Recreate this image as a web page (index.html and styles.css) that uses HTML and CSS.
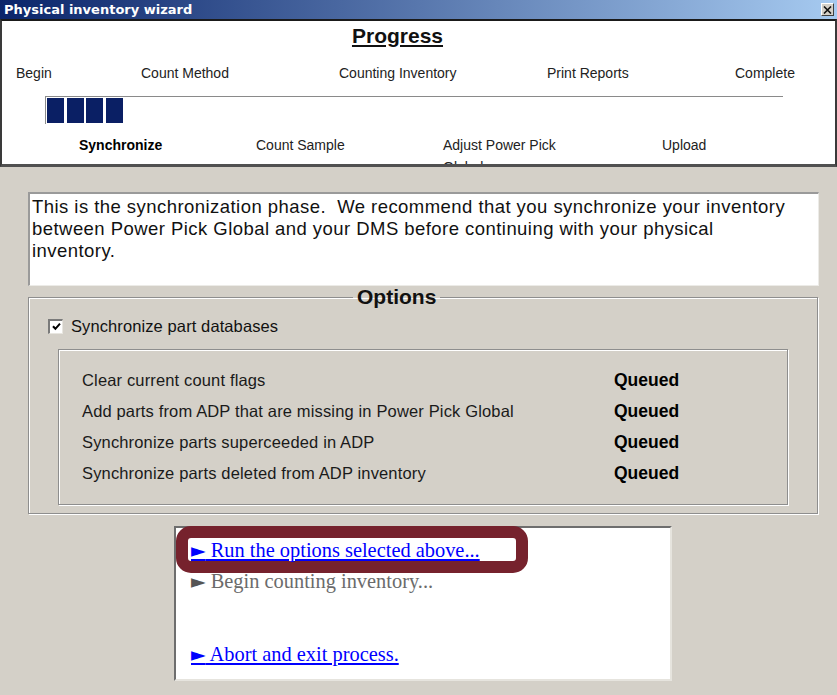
FILE: index.html
```html
<!DOCTYPE html>
<html lang="en">

<head>
    <meta charset="UTF-8">
    <meta name="viewport" content="width=device-width, initial-scale=1.0">
    <title>Physical inventory wizard</title>
    <link rel="stylesheet" href="styles.css">
</head>

<body>
    <div class="window">
        <!-- Title Bar -->
        <div class="titlebar">
            <span class="title">Physical inventory wizard</span>
            <span class="close-btn">
                <svg width="9" height="8" viewBox="0 0 9 8">
                    <path d="M1 0.5 L8 7.5 M8 0.5 L1 7.5" stroke="#111" stroke-width="1.6" fill="none" />
                </svg>
            </span>
        </div>

        <!-- Progress Section -->
        <div class="progress-panel">
            <h1 class="progress-title">Progress</h1>
            <div class="steps steps-top">
                <div>Begin</div>
                <div>Count Method</div>
                <div>Counting Inventory</div>
                <div>Print Reports</div>
                <div>Complete</div>
            </div>
            <div class="progress-bar">
                <div class="block"></div>
                <div class="block"></div>
                <div class="block"></div>
                <div class="block"></div>
            </div>
            <div class="steps steps-bottom">
                <div class="current">Synchronize</div>
                <div>Count Sample</div>
                <div class="wrap">Adjust Power Pick Global</div>
                <div>Upload</div>
            </div>
        </div>

        <!-- Phase Content -->
        <div class="content">
            <div class="description">
                This is the synchronization phase.&nbsp; We recommend that you synchronize your inventory between Power Pick Global and your DMS before continuing with your physical inventory.
            </div>

            <fieldset class="options">
                <legend>Options</legend>
                <div class="check-row">
                    <span class="checkbox">
                        <svg width="9" height="9" viewBox="0 0 9 9">
                            <path d="M1 4.2 L3.4 6.8 L8 1.6" stroke="#000" stroke-width="2" fill="none" />
                        </svg>
                    </span>
                    <span>Synchronize part databases</span>
                </div>
                <div class="task-box">
                    <div class="task-row"><span>Clear current count flags</span><span class="status">Queued</span></div>
                    <div class="task-row"><span>Add parts from ADP that are missing in Power Pick Global</span><span class="status">Queued</span></div>
                    <div class="task-row"><span>Synchronize parts superceeded in ADP</span><span class="status">Queued</span></div>
                    <div class="task-row"><span>Synchronize parts deleted from ADP inventory</span><span class="status">Queued</span></div>
                </div>
            </fieldset>

            <div class="links">
                <div class="highlight"></div>
                <div class="link-row"><a class="link" href="#"><span class="arrow">&#9658;</span> Run the options selected above...</a></div>
                <div class="link-row disabled"><span class="arrow">&#9658;</span> Begin counting inventory...</div>
                <div class="link-row abort"><a class="link" href="#"><span class="arrow">&#9658;</span> Abort and exit process.</a></div>
            </div>
        </div>
    </div>
</body>

</html>
```

FILE: styles.css
```css
body {
    margin: 0;
    font-family: "Liberation Sans", Arial, sans-serif;
    background-color: #d4d0c8;
}

.window {
    width: 837px;
    height: 695px;
    overflow: hidden;
    background-color: #d4d0c8;
}

/* Title bar */
.titlebar {
    height: 19px;
    display: flex;
    align-items: center;
    justify-content: space-between;
    padding: 0 3px 0 4px;
    background: linear-gradient(to right, #0a246a, #a6caf0);
}

.title {
    font-family: "DejaVu Sans", sans-serif;
    font-size: 13px;
    font-weight: bold;
    color: white;
    line-height: 19px;
}

.close-btn {
    width: 13px;
    height: 13px;
    box-sizing: border-box;
    display: flex;
    align-items: center;
    justify-content: center;
    background-color: #d4d0c8;
    border-top: 1px solid #ffffff;
    border-left: 1px solid #ffffff;
    border-right: 1px solid #404040;
    border-bottom: 1px solid #404040;
}

/* Progress panel */
.progress-panel {
    height: 148px;
    box-sizing: border-box;
    overflow: hidden;
    background-color: white;
    border-top: 2px solid #1a1a1a;
    border-left: 2px solid #3a3a3a;
    border-right: 2px solid #3a3a3a;
    border-bottom: 3px solid #505050;
}

.progress-title {
    margin: 3px 0 0 0;
    padding-right: 42px;
    text-align: center;
    font-size: 21px;
    line-height: 24px;
    font-weight: bold;
    text-decoration: underline;
    color: #111;
}

.steps {
    display: grid;
    font-size: 14px;
    line-height: 18px;
    height: 18px;
    color: #222;
    white-space: nowrap;
}

.steps-top {
    margin-top: 16px;
    padding-left: 14px;
    grid-template-columns: 125px 198px 208px 188px auto;
}

.steps-bottom {
    margin-top: 12px;
    padding-left: 77px;
    grid-template-columns: 177px 187px 219px auto;
}

.steps-bottom .current {
    font-weight: bold;
    color: #000;
}

.steps-bottom .wrap {
    white-space: normal;
    width: 130px;
    line-height: 22px;
    margin-top: -2px;
}

.progress-bar {
    margin: 14px 0 0 43px;
    width: 738px;
    height: 28px;
    box-sizing: border-box;
    border-top: 1px solid #8a8a8a;
    border-left: 1px solid #8a8a8a;
    padding: 1px 0 0 1px;
    display: flex;
    gap: 2.5px;
}

.block {
    width: 17px;
    height: 25px;
    background-color: #0a1f64;
}

/* Content area */
.content {
    padding: 25px 18px 0 28px;
}

.description {
    height: 94px;
    box-sizing: border-box;
    background-color: white;
    border-top: 2px solid #9a9a9a;
    border-left: 2px solid #9a9a9a;
    border-right: 1px solid #ecebe7;
    border-bottom: 1px solid #ecebe7;
    padding: 2px 25px 0 2px;
    font-size: 18.5px;
    letter-spacing: 0.45px;
    line-height: 22px;
    color: #111;
}

.options {
    margin: 1px 1px 0 0;
    padding: 0;
    border: 1px solid #8e8e8e;
    box-shadow: inset 1px 1px 0 #ffffff, 1px 1px 0 #ffffff;
}

.options legend {
    margin: 0 0 0 324px;
    padding: 0 4px;
    font-size: 21px;
    line-height: 20px;
    font-weight: bold;
    color: #111;
}

.check-row {
    display: flex;
    align-items: center;
    margin: 10px 0 0 19px;
    height: 18px;
    font-size: 16.5px;
    letter-spacing: 0.1px;
    color: #111;
}

.checkbox {
    width: 15px;
    height: 15px;
    box-sizing: border-box;
    margin-right: 8px;
    display: flex;
    align-items: center;
    justify-content: center;
    background-color: white;
    border-top: 2px solid #7a7a7a;
    border-left: 2px solid #7a7a7a;
    border-right: 1px solid #e8e6e0;
    border-bottom: 1px solid #e8e6e0;
}

.task-box {
    margin: 14px 29px 8px 29px;
    padding: 15px 0 15px 23px;
    border: 1px solid #8e8e8e;
    box-shadow: inset 1px 1px 0 #ffffff, 1px 1px 0 #ffffff;
}

.task-row {
    display: grid;
    grid-template-columns: 532px auto;
    height: 31px;
    line-height: 31px;
    font-size: 16.5px;
    letter-spacing: 0.15px;
    color: #1a1a1a;
}

.status {
    font-weight: bold;
    font-size: 17.5px;
    letter-spacing: 0;
    color: #000;
}

/* Action links */
.links {
    position: relative;
    margin: 12px 0 0 146px;
    width: 498px;
    height: 155px;
    box-sizing: border-box;
    background-color: white;
    border-top: 2px solid #6e6e6e;
    border-left: 2px solid #6e6e6e;
    border-right: 2px solid #e6e4de;
    border-bottom: 2px solid #e6e4de;
    padding: 7px 0 0 15px;
    font-family: "Liberation Serif", "Times New Roman", serif;
    font-size: 20.4px;
}

.link-row {
    height: 31px;
    line-height: 31px;
    position: relative;
}

.link {
    color: #0000ff;
    text-decoration: underline;
    text-underline-offset: 2px;
}

.arrow {
    font-family: "DejaVu Sans", sans-serif;
    font-size: 19px;
}

.disabled {
    color: #6b6b6b;
}

.disabled .arrow {
    color: #555;
}

.abort {
    margin-top: 42px;
}

.highlight {
    position: absolute;
    left: 0;
    top: -2px;
    width: 352px;
    height: 47px;
    box-sizing: border-box;
    border: 12px solid #76222d;
    border-radius: 15px;
}
```
